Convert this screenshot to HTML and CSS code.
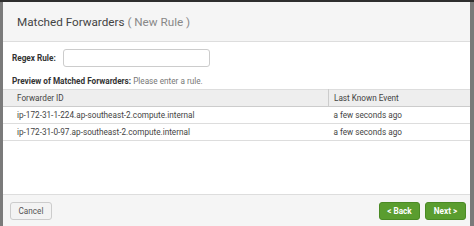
FILE: index.html
```html
<!DOCTYPE html>
<html lang="en">
<head>
    <meta charset="UTF-8">
    <title>Matched Forwarders</title>
    <link rel="stylesheet" href="styles.css">
</head>
<body>
    <div class="modal">
        <div class="modal-header">
            <h3>Matched Forwarders <span class="sub">( New Rule )</span></h3>
        </div>
        <div class="modal-body">
            <div class="form-row">
                <label for="regex">Regex Rule:</label>
                <input type="text" id="regex">
            </div>
            <div class="preview"><b>Preview of Matched Forwarders:</b> Please enter a rule.</div>
        </div>
        <table class="table">
            <thead>
                <tr>
                    <th class="col-id">Forwarder ID</th>
                    <th>Last Known Event</th>
                </tr>
            </thead>
            <tbody>
                <tr>
                    <td>ip-172-31-1-224.ap-southeast-2.compute.internal</td>
                    <td>a few seconds ago</td>
                </tr>
                <tr>
                    <td>ip-172-31-0-97.ap-southeast-2.compute.internal</td>
                    <td>a few seconds ago</td>
                </tr>
            </tbody>
        </table>
        <div class="spacer"></div>
        <div class="modal-footer">
            <button class="btn">Cancel</button>
            <div class="right">
                <button class="btn btn-green">&lt; Back</button>
                <button class="btn btn-green">Next &gt;</button>
            </div>
        </div>
    </div>
</body>
</html>
```
FILE: styles.css
```css
body {
    margin: 0;
    background-color: #7a7a7a;
    border-top: 2px solid #2e2e2e;
    padding: 0 4px 0 3px;
    font-family: Roboto, "Liberation Sans", Arial, sans-serif;
    height: 224px;
    overflow: hidden;
}
.modal {
    background-color: #fff;
    height: 224px;
    display: flex;
    flex-direction: column;
}
.modal-header {
    background-color: #f5f5f5;
    border-bottom: 1px solid #ddd;
    height: 39px;
    display: flex;
    align-items: center;
    padding-left: 14px;
}
.modal-header h3 {
    margin: 0;
    font-size: 11.7px;
    font-weight: normal;
    color: #444;
}
.modal-header .sub {
    color: #888;
}
.modal-body {
    padding: 6px 9px 0 9px;
    font-size: 8.2px;
    color: #333;
}
.form-row {
    display: flex;
    align-items: center;
    height: 19px;
}
.form-row label {
    font-weight: bold;
    width: 51px;
    white-space: nowrap;
}
.form-row input {
    width: 147px;
    height: 18px;
    box-sizing: border-box;
    border: 1px solid #ccc;
    border-radius: 3px;
    margin: 0;
}
.preview {
    margin-top: 9px;
    height: 12px;
    line-height: 11px;
    color: #777;
}
.preview b {
    color: #333;
}
.table {
    width: 100%;
    border-collapse: collapse;
    font-size: 8.2px;
    color: #444;
    margin-top: 1px;
}
.table th {
    background-color: #eee;
    font-weight: normal;
    text-align: left;
    height: 16px;
    padding: 0 0 0 5px;
    border-top: 1px solid #ddd;
    border-bottom: 1px solid #ccc;
}
.table th.col-id {
    padding-left: 14px;
    width: 311px;
    border-right: 1px solid #ccc;
}
.table td {
    height: 16px;
    padding: 0 0 0 5px;
    border-bottom: 1px solid #ddd;
}
.table td:first-child {
    padding-left: 14px;
}
.spacer {
    flex: 1;
}
.modal-footer {
    background-color: #f5f5f5;
    border-top: 1px solid #ddd;
    height: 32px;
    display: flex;
    align-items: flex-start;
    justify-content: space-between;
    padding: 7px 4px 0 7px;
    box-sizing: border-box;
}
.btn {
    font-family: inherit;
    font-size: 8.2px;
    height: 18px;
    width: 42px;
    padding: 0;
    border: 1px solid #ccc;
    border-radius: 3px;
    background-color: #f3f3f3;
    color: #555;
}
.right {
    display: flex;
    gap: 5px;
}
.btn-green {
    background-color: #5a9d2f;
    border-color: #4a8a24;
    color: #fff;
    font-weight: bold;
    width: 41px;
}
```
